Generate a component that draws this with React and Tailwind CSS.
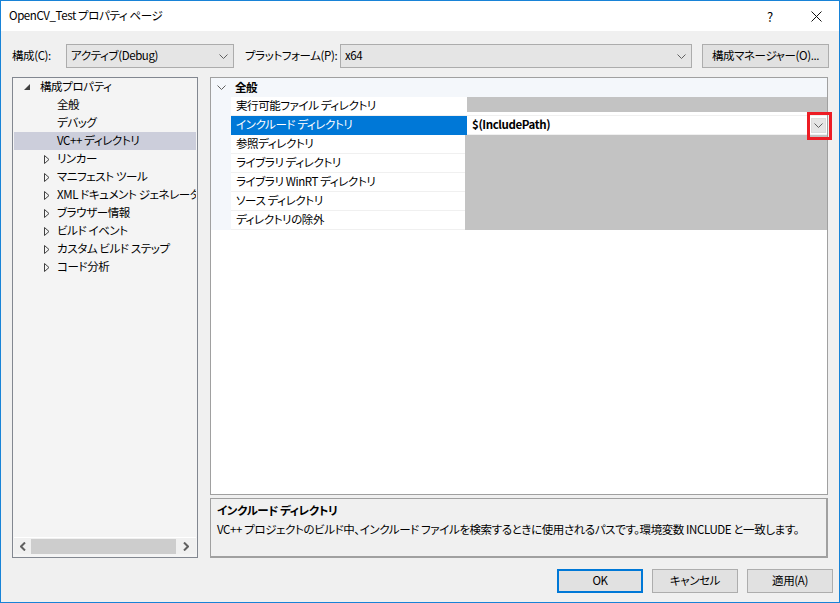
import React from "react";

const Chevron = ({ className = "" }) => (
  <svg width="9" height="5" viewBox="0 0 9 5" className={className}>
    <path d="M0.5 0.5 L4.5 4.5 L8.5 0.5" fill="none" stroke="#606060" strokeWidth="1" />
  </svg>
);

const Collapsed = () => (
  <svg width="6" height="9" viewBox="0 0 6 9" className="shrink-0">
    <path d="M0.5 0.5 L5 4.5 L0.5 8.5 Z" fill="none" stroke="#404040" strokeWidth="1" />
  </svg>
);

const Expanded = () => (
  <svg width="6" height="6" viewBox="0 0 6 6" className="shrink-0">
    <path d="M6 0 L6 6 L0 6 Z" fill="#404040" />
  </svg>
);

const subItems = ["全般", "デバッグ", "VC++ ディレクトリ"];
const groups = [
  "リンカー",
  "マニフェスト ツール",
  "XML ドキュメント ジェネレーター",
  "ブラウザー情報",
  "ビルド イベント",
  "カスタム ビルド ステップ",
  "コード分析",
];

const rows = [
  "実行可能ファイル ディレクトリ",
  "インクルード ディレクトリ",
  "参照ディレクトリ",
  "ライブラリ ディレクトリ",
  "ライブラリ WinRT ディレクトリ",
  "ソース ディレクトリ",
  "ディレクトリの除外",
];

export default function App() {
  return (
    <div className="w-[840px] h-[603px] bg-[#f0f0f0] border border-[#1883d7] flex flex-col text-[11.5px] tracking-[-0.4px] text-black font-['Noto_Sans_CJK_JP','Noto_Sans',sans-serif] [font-feature-settings:'palt'] overflow-hidden">
      {/* Title bar */}
      <div className="h-[30px] bg-white flex items-center pl-[8px] shrink-0">
        <span className="leading-none whitespace-nowrap">OpenCV_Test プロパティ ページ</span>
        <div className="ml-auto flex items-center h-full">
          <div className="w-[46px] h-full flex items-center justify-center text-[13px] leading-none">?</div>
          <div className="w-[46px] h-full flex items-center justify-center">
            <svg width="11" height="11" viewBox="0 0 11 11">
              <path d="M0.5 0.5 L10.5 10.5 M10.5 0.5 L0.5 10.5" stroke="#111" strokeWidth="1" />
            </svg>
          </div>
        </div>
      </div>

      {/* Config row */}
      <div className="flex items-center h-[24px] mt-[13px] pl-[11px] shrink-0">
        <span className="w-[54px] leading-none whitespace-nowrap">構成(C):</span>
        <div className="w-[168px] h-full bg-[#e5e5e5] border border-[#acacac] flex items-center pl-[4px] pr-[5px]">
          <span className="leading-none whitespace-nowrap">アクティブ(Debug)</span>
          <Chevron className="ml-auto" />
        </div>
        <span className="ml-[11px] w-[95px] leading-none whitespace-nowrap">プラットフォーム(P):</span>
        <div className="w-[352px] h-full bg-[#e5e5e5] border border-[#acacac] flex items-center pl-[4px] pr-[5px]">
          <span className="leading-none">x64</span>
          <Chevron className="ml-auto" />
        </div>
        <div className="ml-[10px] w-[127px] h-full bg-[#e1e1e1] border border-[#adadad] flex items-center justify-center">
          <span className="leading-none whitespace-nowrap">構成マネージャー(O)...</span>
        </div>
      </div>

      {/* Main area */}
      <div className="flex gap-[12px] mt-[9px] pl-[11px] h-[481px] shrink-0">
        {/* Tree */}
        <div className="w-[186px] h-full bg-[#f4f4f4] border border-[#828790] flex flex-col">
          <div className="flex-1 flex flex-col px-[1px]">
            <div className="h-[18px] flex items-center pl-[10px]">
              <Expanded />
              <span className="leading-none ml-[10px]">構成プロパティ</span>
            </div>
            {subItems.map((s, i) => (
              <div
                key={s}
                className={`h-[18px] flex items-center pl-[43px] ${i === 2 ? "bg-[#cccedb]" : ""}`}
              >
                <span className="leading-none whitespace-nowrap">{s}</span>
              </div>
            ))}
            {groups.map((g) => (
              <div key={g} className="h-[18px] flex items-center pl-[30px] whitespace-nowrap overflow-hidden">
                <Collapsed />
                <span className="leading-none ml-[7px]">{g}</span>
              </div>
            ))}
          </div>
          <div className="h-[17px] border-t border-white bg-[#f0f0f0] flex items-center mx-[1px] mb-[3px]">
            <div className="w-[17px] flex items-center justify-center">
              <svg width="6" height="9" viewBox="0 0 6 9"><path d="M5 0.5 L1 4.5 L5 8.5" fill="none" stroke="#606060" strokeWidth="2" /></svg>
            </div>
            <div className="w-[145px] h-[15px] bg-[#cdcdcd]" />
            <div className="flex-1 flex items-center justify-center">
              <svg width="6" height="9" viewBox="0 0 6 9"><path d="M1 0.5 L5 4.5 L1 8.5" fill="none" stroke="#606060" strokeWidth="2" /></svg>
            </div>
          </div>
        </div>

        {/* Right */}
        <div className="w-[618px] h-full flex flex-col gap-[3px]">
          <div className="h-[418px] bg-white border border-[#a0a0a0] flex flex-col">
            <div className="h-[19px] bg-[#f4f7fb] flex items-center shrink-0">
              <div className="w-[20px] flex items-center justify-center">
                <Chevron />
              </div>
              <span className="leading-none font-bold ml-[4px]">全般</span>
            </div>
            {rows.map((r, i) => {
              const sel = i === 1;
              return (
                <div key={r} className="h-[19px] flex shrink-0">
                  <div className="w-[20px] bg-[#f4f7fb]" />
                  <div
                    className={`w-[236px] flex items-center pl-[5px] border-b ${
                      sel ? "bg-[#0078d7] text-white border-[#0078d7]" : "border-[#f0f0f0]"
                    }`}
                  >
                    <span className="leading-none whitespace-nowrap">{r}</span>
                  </div>
                  {i === 0 && (
                    <div className="flex-1 flex flex-col border-b border-[#f0f0f0]">
                      <div className="h-[15px] bg-[#c3c3c3]" />
                    </div>
                  )}
                  {sel && (
                    <div className="flex-1 relative flex items-center pl-[5px] border-b border-[#f0f0f0]">
                      <span className="leading-none font-bold">$(IncludePath)</span>
                      <div className="ml-auto mr-[1px] w-[15px] h-[15px] bg-[#e5e5e5] border border-[#dcdcdc] flex items-center justify-center">
                        <Chevron />
                      </div>
                      <div className="absolute right-[-5px] top-[-4px] w-[25px] h-[28px] border-[3px] border-[#ed1c24]" />
                    </div>
                  )}
                  {i > 1 && <div className="flex-1 bg-[#c3c3c3] -ml-[2px]" />}
                </div>
              );
            })}
          </div>
          <div className="h-[60px] bg-[#f0f0f0] border border-[#a0a0a0] border-b-2 border-r-2 px-[6px] pt-[4px] flex flex-col gap-[5px]">
            <span className="font-bold leading-[14px] whitespace-nowrap">インクルード ディレクトリ</span>
            <span className="leading-[14px] whitespace-nowrap">
              VC++ プロジェクトのビルド中、インクルード ファイルを検索するときに使用されるパスです。環境変数 INCLUDE と一致します。
            </span>
          </div>
        </div>
      </div>

      {/* Buttons */}
      <div className="flex justify-end mt-[11px] pr-[6px] gap-[9px] shrink-0">
        <div className="w-[86px] h-[24px] bg-[#e1e1e1] border-2 border-[#0078d7] flex items-center justify-center">
          <span className="leading-none">OK</span>
        </div>
        <div className="w-[86px] h-[24px] bg-[#e1e1e1] border border-[#adadad] flex items-center justify-center">
          <span className="leading-none">キャンセル</span>
        </div>
        <div className="w-[86px] h-[24px] bg-[#e1e1e1] border border-[#adadad] flex items-center justify-center">
          <span className="leading-none">適用(A)</span>
        </div>
      </div>
    </div>
  );
}
